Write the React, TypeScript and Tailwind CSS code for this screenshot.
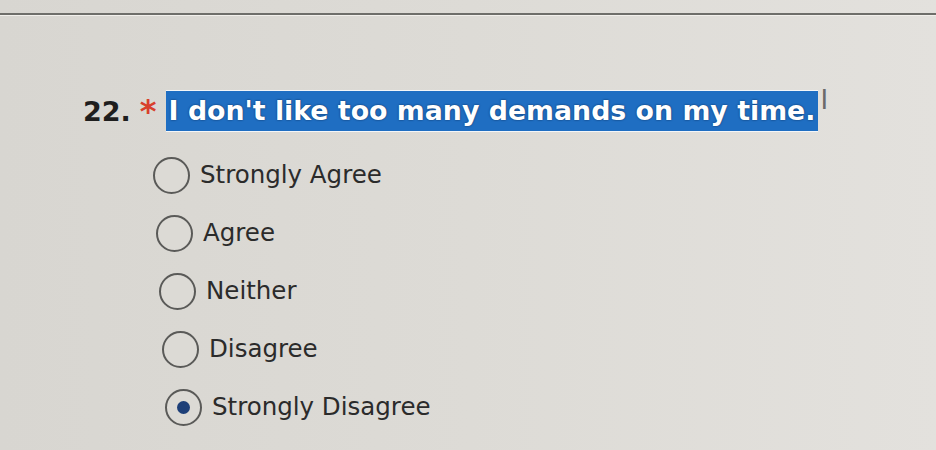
import React from 'react';

const options = [
  { label: 'Strongly Agree', indent: 'ml-[153px]', checked: false },
  { label: 'Agree', indent: 'ml-[156px]', checked: false },
  { label: 'Neither', indent: 'ml-[159px]', checked: false },
  { label: 'Disagree', indent: 'ml-[162px]', checked: false },
  { label: 'Strongly Disagree', indent: 'ml-[165px]', checked: true },
];

const Radio: React.FC<{ checked: boolean }> = ({ checked }) => (
  <span className="w-[37px] h-[37px] rounded-full border-2 border-[#5a5a58] bg-[#dcdad5] flex items-center justify-center shrink-0">
    {checked && <span className="w-[13px] h-[13px] rounded-full bg-[#1d3f78]" />}
  </span>
);

const App: React.FC = () => {
  return (
    <div className="w-[936px] h-[450px] overflow-hidden bg-gradient-to-r from-[#d8d6d1] via-[#dddbd6] to-[#e3e1dd] font-['DejaVu_Sans',Verdana,sans-serif] text-[#2a2a2a]">
      {/* divider above the question */}
      <div className="pt-[13px]">
        <div className="h-[3px] bg-[#6e6e6a] border-b border-[#f2f0ec]" />
      </div>

      {/* question */}
      <div className="mt-[74px] ml-[83px] flex items-center">
        <span className="text-[27px] font-bold leading-none text-[#1e1e1e]">22.</span>
        <span className="ml-[9px] text-[32px] font-bold leading-none text-[#d8402c]">*</span>
        <span className="ml-[9px] h-[42px] px-[3px] flex items-center bg-[#1f6ec2] border-y border-[#f4f6f8] text-white text-[26.8px] font-bold leading-none whitespace-nowrap [text-shadow:0_0_2px_#0b2a55]">
          I don't like too many demands on my time.
        </span>
        <span className="ml-[2px] self-start -mt-[3px] text-[26px] leading-none text-[#6b6b6b]">I</span>
      </div>

      {/* answers */}
      <div className="mt-[14px] flex flex-col">
        {options.map((o) => (
          <label key={o.label} className={`${o.indent} h-[58px] flex items-center gap-[10px]`}>
            <Radio checked={o.checked} />
            <span className="text-[24.5px] leading-none text-[#2b2b2b]">{o.label}</span>
          </label>
        ))}
      </div>
    </div>
  );
};

export default App;
